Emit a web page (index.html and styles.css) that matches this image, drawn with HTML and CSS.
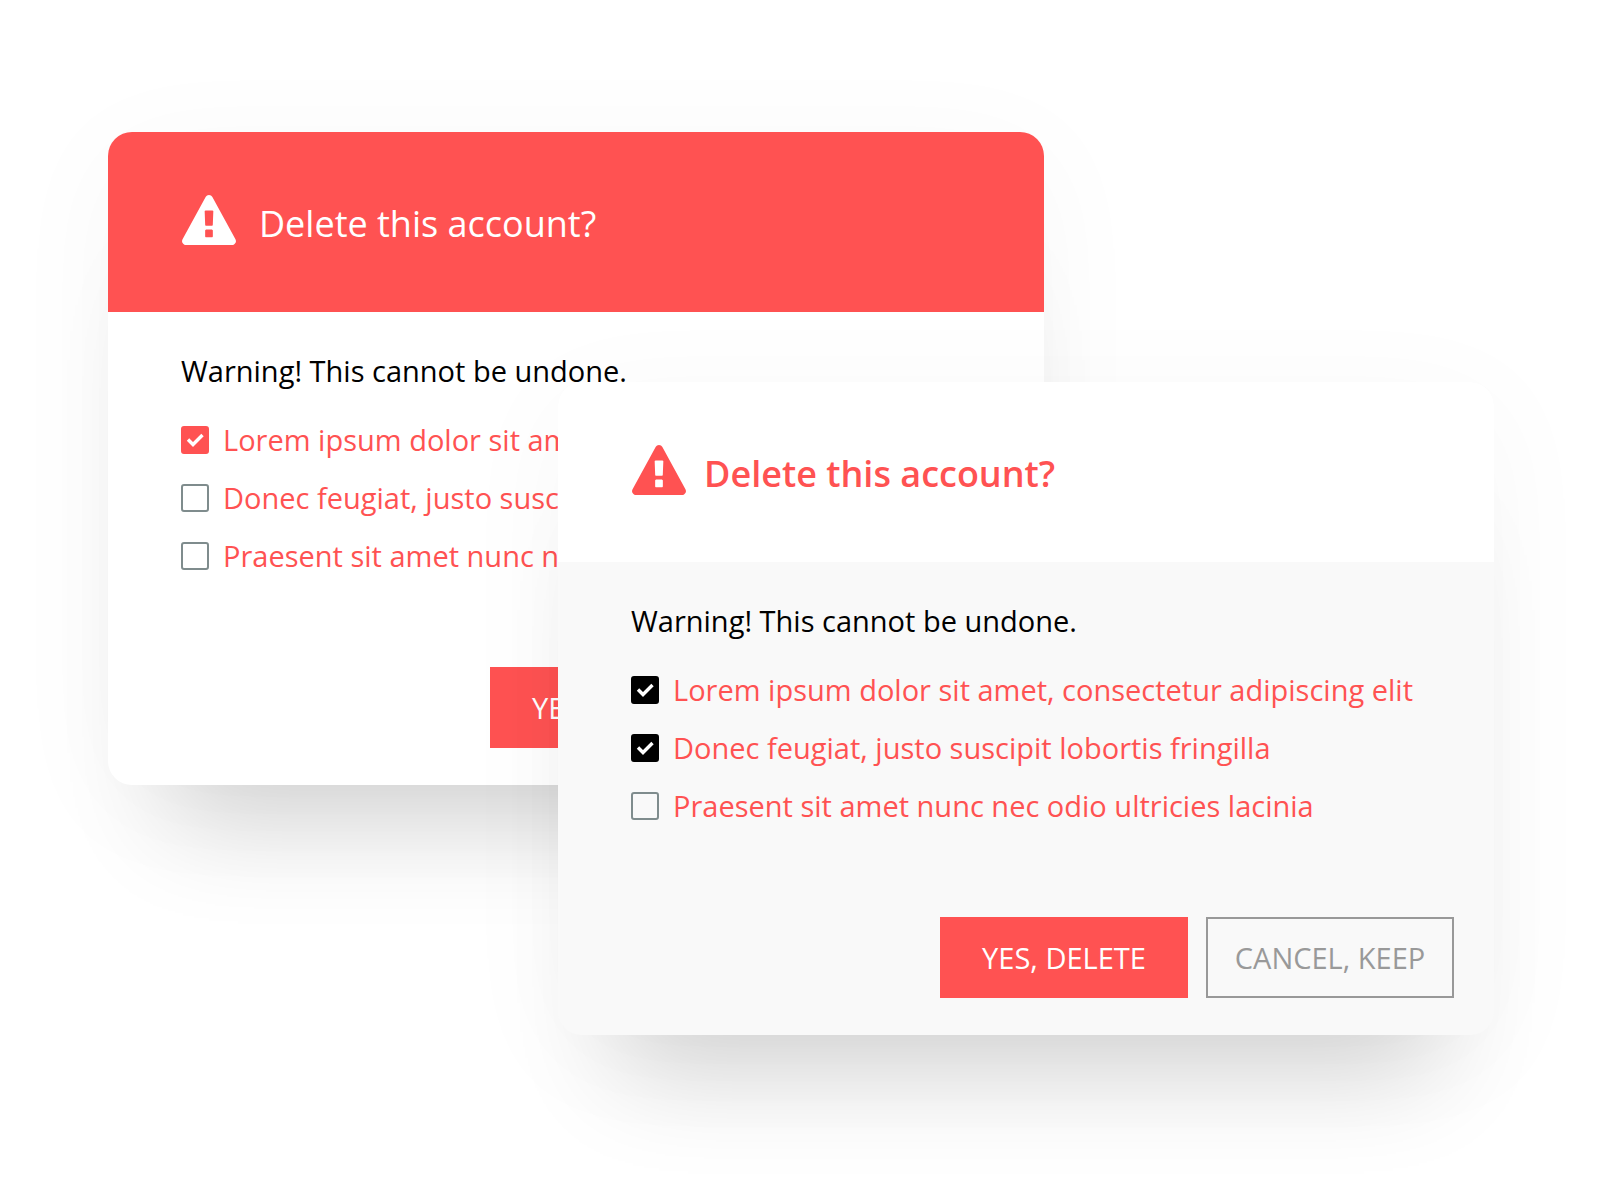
FILE: index.html
```html
<!DOCTYPE html>
<html lang="en">
<head>
<meta charset="utf-8">
<title>Delete this account?</title>
<link rel="stylesheet" href="styles.css">
</head>
<body>
<svg class="sprite" aria-hidden="true">
  <symbol id="warning" viewBox="0 0 1792 1664">
    <path d="M1024 1375v-190q0-14-9.500-23.500t-22.500-9.500h-192q-13 0-22.500 9.500t-9.500 23.500v190q0 14 9.500 23.500t22.500 9.500h192q13 0 22.500-9.500t9.500-23.500zm-2-374l18-459q0-12-10-19-13-11-24-11h-220q-11 0-24 11-10 7-10 21l17 457q0 10 10 16.500t24 6.500h185q14 0 23.500-6.500t10.500-16.500zm-14-934l768 1408q35 63-2 126-17 29-46.500 46t-63.500 17h-1536q-34 0-63.500-17t-46.500-46q-37-63-2-126l768-1408q17-31 47-49t65-18 65 18 47 49z"/>
  </symbol>
  <symbol id="check" viewBox="0 0 28 28">
    <path d="M7 13.500l5 5 9.500-9.500" fill="none" stroke="currentColor" stroke-width="3.400"/>
  </symbol>
</svg>
<main class="stage">
  <section class="card card-back" aria-labelledby="title-back">
    <header class="card-header">
      <svg class="icon" aria-hidden="true"><use href="#warning"/></svg>
      <h2 class="title" id="title-back">Delete this account?</h2>
    </header>
    <form class="card-body">
      <p class="warning">Warning! This cannot be undone.</p>
      <div class="options">
        <label class="option"><span class="box"><input type="checkbox" checked><svg aria-hidden="true"><use href="#check"/></svg></span>Lorem ipsum dolor sit amet, consectetur adipiscing elit</label>
        <label class="option"><span class="box"><input type="checkbox"><svg aria-hidden="true"><use href="#check"/></svg></span>Donec feugiat, justo suscipit lobortis fringilla</label>
        <label class="option"><span class="box"><input type="checkbox"><svg aria-hidden="true"><use href="#check"/></svg></span>Praesent sit amet nunc nec odio ultricies lacinia</label>
      </div>
      <div class="actions">
        <button type="button" class="button button-primary">YES, DELETE</button>
        <button type="button" class="button button-outline">CANCEL, KEEP</button>
      </div>
    </form>
  </section>

  <section class="card card-front" aria-labelledby="title-front">
    <header class="card-header">
      <svg class="icon" aria-hidden="true"><use href="#warning"/></svg>
      <h2 class="title" id="title-front">Delete this account?</h2>
    </header>
    <form class="card-body">
      <p class="warning">Warning! This cannot be undone.</p>
      <div class="options">
        <label class="option"><span class="box"><input type="checkbox" checked><svg aria-hidden="true"><use href="#check"/></svg></span>Lorem ipsum dolor sit amet, consectetur adipiscing elit</label>
        <label class="option"><span class="box"><input type="checkbox" checked><svg aria-hidden="true"><use href="#check"/></svg></span>Donec feugiat, justo suscipit lobortis fringilla</label>
        <label class="option"><span class="box"><input type="checkbox"><svg aria-hidden="true"><use href="#check"/></svg></span>Praesent sit amet nunc nec odio ultricies lacinia</label>
      </div>
      <div class="actions">
        <button type="button" class="button button-primary">YES, DELETE</button>
        <button type="button" class="button button-outline">CANCEL, KEEP</button>
      </div>
    </form>
  </section>
</main>
</body>
</html>
```
FILE: styles.css
```css
:root {
  --red: #ff5252;
  --grey: #999;
}

* {
  box-sizing: border-box;
}

body {
  margin: 0;
  background: #fff;
  color: #000;
  font: 400 29px/40px "Open Sans", sans-serif;
}

.sprite {
  display: none;
}

.stage {
  display: grid;
  grid-template-columns: 450fr 486fr 450fr;
  align-items: start;
  padding: 132px 106px 140px 108px;
}

.card {
  grid-row: 1;
  border-radius: 24px;
  box-shadow: 0 98px 100px -60px rgba(0, 0, 0, 0.16), 0 20px 120px rgba(0, 0, 0, 0.035);
}

.card-back {
  grid-column: 1 / 3;
  background: #fff;
  --checked: var(--red);
}

.card-front {
  grid-column: 2 / 4;
  margin-top: 250px;
  z-index: 1;
  background: #f9f9f9;
  --checked: #000;
}

.card-header {
  display: flex;
  align-items: flex-start;
  gap: 23px;
  min-height: 180px;
  padding: 63px 74px 0;
  border-radius: 24px 24px 0 0;
}

.card-back .card-header {
  background: var(--red);
  color: #fff;
}

.card-front .card-header {
  gap: 18px;
  background: #fff;
  color: var(--red);
}

.icon {
  width: 54px;
  height: 50px;
  fill: currentColor;
}

.title {
  margin: 0;
  font-size: 36px;
  font-weight: 400;
  line-height: 58px;
}

.card-front .title {
  font-weight: 600;
}

.card-body {
  display: flex;
  flex-direction: column;
  padding: 39px 40px 37px 73px;
}

.warning {
  margin: 0 0 29px;
}

.options {
  display: flex;
  flex-direction: column;
  gap: 18px;
  margin-bottom: 91px;
  color: var(--red);
}

.option {
  display: flex;
  align-items: center;
  gap: 14px;
  white-space: nowrap;
}

.box {
  display: grid;
  width: 28px;
  height: 28px;
}

.box input,
.box svg {
  grid-area: 1 / 1;
  width: 28px;
  height: 28px;
  margin: 0;
}

.box input {
  appearance: none;
  border: 2px solid #7f8c8d;
  border-radius: 3px;
}

.box input:checked {
  border-color: var(--checked);
  background: var(--checked);
}

.box svg {
  color: #fff;
  pointer-events: none;
  visibility: hidden;
}

.box input:checked + svg {
  visibility: visible;
}

.actions {
  display: flex;
  justify-content: flex-end;
  gap: 18px;
}

.button {
  width: 248px;
  height: 81px;
  padding: 0;
  border: 2px solid;
  background: none;
  font: inherit;
}

.button-primary {
  border-color: var(--red);
  background: var(--red);
  color: #fff;
}

.button-outline {
  border-color: var(--grey);
  color: var(--grey);
}
```
